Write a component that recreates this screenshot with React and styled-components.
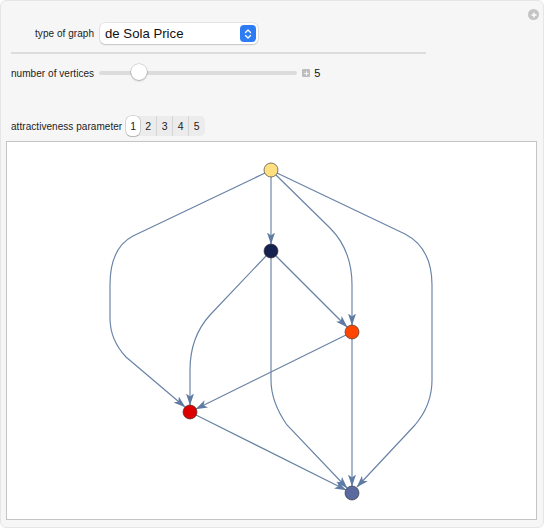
import React from "react";
import styled, { createGlobalStyle } from "styled-components";

const GlobalStyle = createGlobalStyle`
  html, body { margin: 0; padding: 0; background: #ffffff; }
  body { font-family: "Liberation Sans", Arial, sans-serif; }
`;

const Panel = styled.div`
  position: relative;
  box-sizing: border-box;
  width: 544px;
  height: 528px;
  background: #f6f6f6;
  border: 1px solid #e6e6e6;
  border-radius: 6px;
  display: flex;
  flex-direction: column;
`;

const CornerButton = styled.div`
  position: absolute;
  top: 8px;
  right: 4px;
  width: 11px;
  height: 11px;
  border-radius: 50%;
  background: #c4c4c4;
  display: flex;
  align-items: center;
  justify-content: center;
`;

const Controls = styled.div`
  display: flex;
  flex-direction: column;
  padding-left: 10px;
`;

const Row = styled.div`
  display: flex;
  align-items: center;
  margin-top: ${(p) => p.top}px;
  padding-left: ${(p) => p.indent || 0}px;
  height: ${(p) => p.h}px;
`;

const Label = styled.span`
  font-size: 10px;
  color: #1c1c1c;
  letter-spacing: 0.05px;
  margin-right: ${(p) => p.gap}px;
  white-space: nowrap;
`;

const Popup = styled.div`
  box-sizing: border-box;
  width: 158px;
  height: 21px;
  background: #ffffff;
  border-radius: 5px;
  box-shadow: 0 0 0 0.5px rgba(0, 0, 0, 0.14), 0 1px 1.5px rgba(0, 0, 0, 0.14);
  display: flex;
  align-items: center;
  justify-content: space-between;
  padding: 0 2px 0 5px;
`;

const PopupText = styled.span`
  font-size: 13.2px;
  color: #111;
`;

const Stepper = styled.div`
  width: 16px;
  height: 17px;
  border-radius: 4px;
  background: #2d7cf6;
  display: flex;
  align-items: center;
  justify-content: center;
`;

const Separator = styled.div`
  width: 415px;
  height: 2px;
  background: #dddddd;
  margin-top: 8px;
`;

const Track = styled.div`
  position: relative;
  width: 198px;
  height: 4px;
  border-radius: 2px;
  background: #dcdcdc;
  margin-right: 5px;
`;

const Thumb = styled.div`
  position: absolute;
  top: -7px;
  left: ${(p) => p.pos}px;
  width: 16px;
  height: 16px;
  border-radius: 50%;
  background: #ffffff;
  box-shadow: 0 0 0 0.5px rgba(0, 0, 0, 0.2), 0 1px 2px rgba(0, 0, 0, 0.25);
`;

const PlusBox = styled.div`
  width: 8px;
  height: 8px;
  background: #bdbdbd;
  border-radius: 1px;
  display: flex;
  align-items: center;
  justify-content: center;
  margin-right: 4px;
`;

const Value = styled.span`
  font-size: 11px;
  color: #111;
`;

const Setter = styled.div`
  display: flex;
  align-items: center;
  height: 20px;
  background: #ececec;
  border-radius: 5px;
  padding: 0 1px 0 0;
`;

const SetterButton = styled.div`
  box-sizing: border-box;
  width: ${(p) => (p.active ? 14 : 16)}px;
  height: 20px;
  display: flex;
  align-items: center;
  justify-content: center;
  font-size: 10.5px;
  color: #1c1c1c;
  background: ${(p) => (p.active ? "#ffffff" : "transparent")};
  border-radius: ${(p) => (p.active ? "5px" : "0")};
  box-shadow: ${(p) =>
    p.active ? "0 0 0 0.5px rgba(0,0,0,0.25), 0 1px 1px rgba(0,0,0,0.15)" : "none"};
  border-left: ${(p) => (p.divider ? "1px solid #d6d6d6" : "none")};
`;

const GraphBox = styled.div`
  box-sizing: border-box;
  margin: 5px 0 0 5px;
  width: 531px;
  height: 379px;
  background: #ffffff;
  border: 1px solid #c4c4c4;
`;

const EDGE = "#6882a6";

const nodes = [
  { x: 271, y: 170, fill: "#ffdf80" },
  { x: 271, y: 251, fill: "#15224f" },
  { x: 352, y: 332, fill: "#ff4500" },
  { x: 190, y: 412, fill: "#dd0000" },
  { x: 352, y: 493, fill: "#5a6aa0" },
];

const edges = [
  "M271 177 L271 244",
  "M276 175 L330 228 Q352 250 352 285 L352 325",
  "M277 173 L405 234 Q432 248 432 285 L432 380 Q432 405 415 425 L357 487",
  "M265 173 L133 236 Q110 248 110 285 L110 318 Q110 340 126 357 L185 407",
  "M266 256 L210 315 Q190 337 190 370 L190 405",
  "M271 258 L271 380 Q271 402 287 425 L347 488",
  "M276 256 L347 327",
  "M346 335 L196 409",
  "M352 339 L352 486",
  "M196 415 L346 490",
];

const PlusGlyph = ({ size, color }) => (
  <svg width={size} height={size} viewBox="0 0 8 8">
    <path d="M4 1.5 V6.5 M1.5 4 H6.5" stroke={color} strokeWidth="1.4" />
  </svg>
);

const Graph = () => (
  <svg width="529" height="377" viewBox="7 142 529 377">
    <defs>
      <marker
        id="arrow"
        viewBox="0 0 12 8"
        refX="11.5"
        refY="4"
        markerWidth="12"
        markerHeight="8"
        markerUnits="userSpaceOnUse"
        orient="auto"
      >
        <path d="M0 0 L12 4 L0 8 L3 4 Z" fill="#5f7aa3" />
      </marker>
    </defs>
    {edges.map((d, i) => (
      <path
        key={i}
        d={d}
        fill="none"
        stroke={EDGE}
        strokeWidth="1.15"
        markerEnd="url(#arrow)"
      />
    ))}
    {nodes.map((n, i) => (
      <circle
        key={i}
        cx={n.x}
        cy={n.y}
        r="7"
        fill={n.fill}
        stroke="rgba(40,40,40,0.75)"
        strokeWidth="0.8"
      />
    ))}
  </svg>
);

export default function App() {
  return (
    <>
      <GlobalStyle />
      <Panel>
        <CornerButton>
          <PlusGlyph size={8} color="#ffffff" />
        </CornerButton>
        <Controls>
          <Row top={22} h={21} indent={24}>
            <Label gap={6}>type of graph</Label>
            <Popup>
              <PopupText>de Sola Price</PopupText>
              <Stepper>
                <svg width="8" height="12" viewBox="0 0 8 12">
                  <path
                    d="M1.5 4.5 L4 2 L6.5 4.5 M1.5 7.5 L4 10 L6.5 7.5"
                    fill="none"
                    stroke="#ffffff"
                    strokeWidth="1.3"
                    strokeLinecap="round"
                    strokeLinejoin="round"
                  />
                </svg>
              </Stepper>
            </Popup>
          </Row>
          <Separator />
          <Row top={11} h={16}>
            <Label gap={5}>number of vertices</Label>
            <Track>
              <Thumb pos={32} />
            </Track>
            <PlusBox>
              <PlusGlyph size={7} color="#f4f4f4" />
            </PlusBox>
            <Value>5</Value>
          </Row>
          <Row top={35} h={20}>
            <Label gap={4}>attractiveness parameter</Label>
            <Setter>
              <SetterButton active>1</SetterButton>
              <SetterButton>2</SetterButton>
              <SetterButton divider>3</SetterButton>
              <SetterButton divider>4</SetterButton>
              <SetterButton divider>5</SetterButton>
            </Setter>
          </Row>
        </Controls>
        <GraphBox>
          <Graph />
        </GraphBox>
      </Panel>
    </>
  );
}
